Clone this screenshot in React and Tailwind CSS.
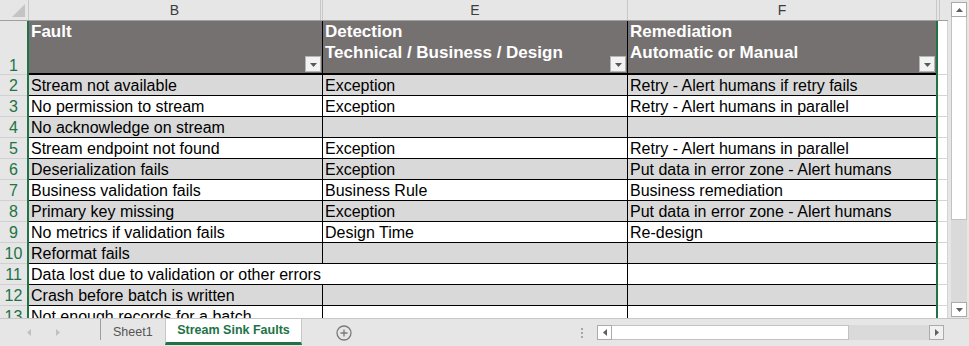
import React from "react";

const ROWS = [
  ["Stream not available", "Exception", "Retry - Alert humans if retry fails"],
  ["No permission to stream", "Exception", "Retry - Alert humans in parallel"],
  ["No acknowledge on stream", "", ""],
  ["Stream endpoint not found", "Exception", "Retry - Alert humans in parallel"],
  ["Deserialization fails", "Exception", "Put data in error zone - Alert humans"],
  ["Business validation fails", "Business Rule", "Business remediation"],
  ["Primary key missing", "Exception", "Put data in error zone - Alert humans"],
  ["No metrics if validation fails", "Design Time", "Re-design"],
  ["Reformat fails", "", ""],
  ["Data lost due to validation or other errors", "", ""],
  ["Crash before batch is written", "", ""],
  ["Not enough records for a batch", "", ""],
];

// index into ROWS of rows whose text runs over into the empty E cell (row 11)
const OVERFLOW = [9];

function FilterButton() {
  return (
    <div className="mb-[1px] mr-[1px] flex h-[16px] w-[16px] shrink-0 items-center justify-center self-end border border-[#b5b5b5] bg-[#f3f3f3] pt-[2px]">
      <svg width="7" height="4" viewBox="0 0 7 4">
        <path d="M0 0h7L3.5 4z" fill="#595959" />
      </svg>
    </div>
  );
}

function Arrow({ dir, color = "#606060" }) {
  const d = {
    up: "M0 4L3.5 0L7 4z",
    down: "M0 0h7L3.5 4z",
    left: "M4 0v7L0 3.5z",
    right: "M0 0v7L4 3.5z",
  }[dir];
  const horiz = dir === "left" || dir === "right";
  return (
    <svg width={horiz ? 4 : 7} height={horiz ? 7 : 4} viewBox={horiz ? "0 0 4 7" : "0 0 7 4"}>
      <path d={d} fill={color} />
    </svg>
  );
}

function RowHeader({ n, tall }) {
  return (
    <div
      className={`flex w-[27px] shrink-0 justify-center border-b border-[#d0d0d0] bg-[#e6e6e6] text-[16px] text-[#217346] ${
        tall ? "h-[54px] items-end leading-[16px]" : "h-[21px] pt-[1px] leading-[20px]"
      }`}
    >
      {n}
    </div>
  );
}

function App() {
  return (
    <div className="flex h-[346px] w-[969px] flex-col overflow-hidden bg-[#e6e6e6] font-['Liberation_Sans',Arial,sans-serif] text-black">
      <div className="flex h-[318px] shrink-0">
        {/* Sheet grid */}
        <div className="flex w-[948px] flex-col overflow-hidden bg-white">
          {/* Column letters */}
          <div className="flex h-[21px] shrink-0 border-b border-[#a0a0a0] bg-[#e6e6e6] text-[14px] leading-[20px] text-[#3c3c3c]">
            <div className="flex w-[29px] items-end justify-end border-r border-[#c8c8c8] pb-[3px] pr-[3px]">
              <svg width="13" height="13" viewBox="0 0 13 13">
                <path d="M13 0V13H0z" fill="#c4c4c4" />
              </svg>
            </div>
            <div className="w-[292px] border-r border-[#c8c8c8] text-center">B</div>
            <div className="w-[2px] border-r border-[#c8c8c8]" />
            <div className="w-[305px] border-r border-[#c8c8c8] text-center">E</div>
            <div className="w-[309px] border-r border-[#c8c8c8] text-center">F</div>
            <div className="w-[3px] border-r border-[#c8c8c8]" />
            <div className="w-[8px]" />
          </div>

          {/* Row 1: table header */}
          <div className="flex h-[54px] shrink-0">
            <RowHeader n={1} tall />
            <div className="w-[2px] bg-[#217346]" />
            <div className="flex w-[907px] border-b-2 border-black bg-[#767171] text-[17px] font-bold leading-[21px] text-white">
              <div className="flex w-[294px] justify-between border-r border-black pl-[2px]">
                <div>Fault</div>
                <FilterButton />
              </div>
              <div className="flex w-[305px] justify-between border-r border-black pl-[2px]">
                <div>
                  Detection
                  <br />
                  Technical / Business / Design
                </div>
                <FilterButton />
              </div>
              <div className="flex w-[308px] justify-between pl-[2px]">
                <div>
                  Remediation
                  <br />
                  Automatic or Manual
                </div>
                <FilterButton />
              </div>
            </div>
            <div className="w-[2px] bg-[#217346]" />
            <div className="w-[10px] border-b border-r border-[#d4d4d4]" />
          </div>

          {/* Data rows */}
          {ROWS.map((row, i) => {
            const over = OVERFLOW.includes(i);
            return (
              <div key={i} className="flex h-[21px] shrink-0">
                <RowHeader n={i + 2} />
                <div className="w-[2px] bg-[#217346]" />
                <div
                  className={`flex w-[907px] border-b border-black text-[16px] leading-[20px] ${
                    i % 2 === 0 ? "bg-[#d9d9d9]" : "bg-white"
                  }`}
                >
                  <div
                    className={`w-[294px] shrink-0 whitespace-nowrap border-r pl-[2px] pt-[1px] ${
                      over ? "border-transparent" : "border-black"
                    }`}
                  >
                    {row[0]}
                  </div>
                  <div className="w-[305px] shrink-0 whitespace-nowrap border-r border-black pl-[2px] pt-[1px]">
                    {row[1]}
                  </div>
                  <div className="w-[308px] shrink-0 whitespace-nowrap pl-[2px] pt-[1px]">{row[2]}</div>
                </div>
                <div className="w-[2px] bg-[#217346]" />
                <div className="w-[10px] border-b border-r border-[#d4d4d4]" />
              </div>
            );
          })}
        </div>

        {/* Vertical scrollbar */}
        <div className="flex w-[21px] flex-col pb-[1px] pl-[3px] pt-[2px]">
          <div className="flex h-[15px] w-[16px] items-center justify-center border border-[#ababab] bg-white">
            <Arrow dir="up" />
          </div>
          <div className="h-[203px] w-[16px] border-x border-b border-[#c2c2c2] bg-white" />
          <div className="w-[16px] flex-1 bg-[#dadada]" />
          <div className="flex h-[15px] w-[16px] items-center justify-center border border-[#ababab] bg-white">
            <Arrow dir="down" />
          </div>
        </div>
      </div>

      {/* Sheet tabs */}
      <div className="flex h-[28px] shrink-0 items-center border-t border-[#c6c6c6] bg-[#e6e6e6]">
        <div className="flex w-[100px] items-center">
          <div className="ml-[27px]">
            <Arrow dir="left" color="#c0c0c0" />
          </div>
          <div className="ml-[25px]">
            <Arrow dir="right" color="#c0c0c0" />
          </div>
        </div>
        <div className="h-[21px] w-px self-start bg-[#9e9e9e]" />
        <div className="w-[64px] pl-[12px] text-[12.5px] text-[#555]">Sheet1</div>
        <div className="flex h-[26px] w-[137px] items-center justify-center self-start border-x border-b-[3px] border-x-[#c6c6c6] border-b-[#217346] bg-white text-[12.5px] font-bold text-[#217346]">
          Stream Sink Faults
        </div>
        <div className="ml-[34px]">
          <svg width="16" height="16" viewBox="0 0 16 16">
            <circle cx="8" cy="8" r="7" fill="none" stroke="#7a7a7a" strokeWidth="1.3" />
            <path d="M8 4.5v7M4.5 8h7" stroke="#7a7a7a" strokeWidth="1.3" />
          </svg>
        </div>
        <div className="ml-[229px] flex flex-col gap-[2px]">
          <div className="h-[2px] w-[2px] bg-[#a6a6a6]" />
          <div className="h-[2px] w-[2px] bg-[#a6a6a6]" />
          <div className="h-[2px] w-[2px] bg-[#a6a6a6]" />
        </div>
        {/* Horizontal scrollbar */}
        <div className="ml-[14px] flex h-[15px]">
          <div className="flex w-[15px] items-center justify-center border border-[#ababab] bg-white">
            <Arrow dir="left" />
          </div>
          <div className="w-[237px] border-y border-r border-[#c2c2c2] bg-white" />
          <div className="w-[80px] bg-[#dadada]" />
          <div className="flex w-[15px] items-center justify-center border border-[#ababab] bg-[#f0f0f0]">
            <Arrow dir="right" />
          </div>
        </div>
      </div>
    </div>
  );
}

export default App;
